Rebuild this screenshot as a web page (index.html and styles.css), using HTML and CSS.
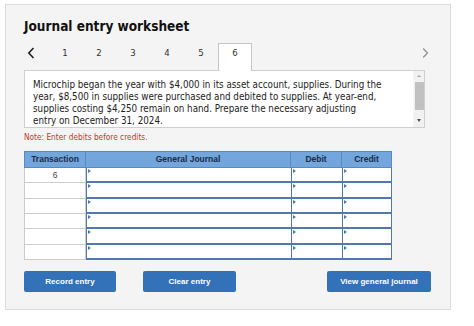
FILE: index.html
```html
<!DOCTYPE html>
<html>
<head>
<meta charset="utf-8">
<link rel="stylesheet" href="styles.css">
</head>
<body>
<div class="panel">
  <h1 class="title">Journal entry worksheet</h1>
  <div class="tabs">
    <div class="nav prev"><svg width="8" height="12" viewBox="0 0 8 12"><path d="M6.5 1 L1.8 6 L6.5 11" fill="none" stroke="#222" stroke-width="1.6"/></svg></div>
    <div class="tab">1</div>
    <div class="tab">2</div>
    <div class="tab">3</div>
    <div class="tab">4</div>
    <div class="tab">5</div>
    <div class="tab active">6</div>
    <div class="spacer"></div>
    <div class="nav next"><svg width="7" height="12" viewBox="0 0 7 12"><path d="M1.2 1.5 L5.5 6 L1.2 10.5" fill="none" stroke="#8a8a8a" stroke-width="1.1"/></svg></div>
  </div>
  <div class="box">
    <div class="desc">Microchip began the year with $4,000 in its asset account, supplies. During the<br>year, $8,500 in supplies were purchased and debited to supplies. At year-end,<br>supplies costing $4,250 remain on hand. Prepare the necessary adjusting<br>entry on December 31, 2024.</div>
    <div class="scrollbar">
      <div class="arrow up"></div>
      <div class="thumb"></div>
      <div class="track"></div>
      <div class="arrow down"></div>
    </div>
  </div>
  <div class="note">Note: Enter debits before credits.</div>
  <div class="grid">
    <div class="hd">Transaction</div>
    <div class="hd">General Journal</div>
    <div class="hd">Debit</div>
    <div class="hd">Credit</div>

    <div class="tc">6</div><div class="in"></div><div class="in"></div><div class="in"></div>
    <div class="tc"></div><div class="in"></div><div class="in"></div><div class="in"></div>
    <div class="tc"></div><div class="in"></div><div class="in"></div><div class="in"></div>
    <div class="tc"></div><div class="in"></div><div class="in"></div><div class="in"></div>
    <div class="tc"></div><div class="in"></div><div class="in"></div><div class="in"></div>
    <div class="tc"></div><div class="in"></div><div class="in"></div><div class="in"></div>
  </div>
  <div class="buttons">
    <button class="btn rec">Record entry</button>
    <button class="btn clr">Clear entry</button>
    <div class="spacer"></div>
    <button class="btn view">View general journal</button>
  </div>
</div>
</body>
</html>
```
FILE: styles.css
```css
* { box-sizing: border-box; }
html, body { margin: 0; padding: 0; background: #fff; }
body { width: 474px; height: 326px; overflow: hidden; }

.panel {
  margin: 4px 0 0 5px;
  width: 446px;
  height: 306px;
  border: 1px solid #dcdcdc;
  background: #f4f4f4;
  padding: 13px 18px 0 18px;
  font-family: "DejaVu Sans Condensed", "DejaVu Sans", sans-serif;
  font-stretch: condensed;
  color: #222;
}

.title {
  margin: 0;
  font-size: 13.5px;
  line-height: 16px;
  font-weight: bold;
  color: #111;
  height: 16px;
}

.tabs {
  margin-top: 9px;
  height: 27px;
  display: flex;
  align-items: flex-start;
}
.nav { height: 27px; display: flex; align-items: flex-start; padding-top: 4px; }
.prev { width: 24px; padding-left: 3px; }
.next { width: 10px; padding-right: 1px; }
.spacer { flex: 1; }
.tab {
  width: 34px;
  height: 27px;
  padding-top: 4px;
  line-height: 12px;
  font-size: 9.5px;
  text-align: center;
  color: #333;
}
.tab.active {
  height: 28px;
  margin-bottom: -1px;
  background: #fff;
  border: 1px solid #c6c6c6;
  border-bottom: none;
  padding-top: 3px;
  position: relative;
  z-index: 1;
}

.box {
  width: 401px;
  height: 58px;
  border: 1px solid #cfcfcf;
  background: #fff;
  display: flex;
  overflow: hidden;
}
.desc {
  flex: 1;
  padding: 8px 10px 0 8px;
  font-size: 9.75px;
  line-height: 12px;
  color: #222;
  overflow: hidden;
  white-space: nowrap;
}
.scrollbar {
  width: 11px;
  display: flex;
  flex-direction: column;
  align-items: center;
  background: #f1f1f1;
  border-left: 1px solid #f6f6f6;
}
.arrow { width: 0; height: 0; border-left: 2px solid transparent; border-right: 2px solid transparent; }
.arrow.up { margin-top: 4px; border-bottom: 2px solid #a3a3a3; }
.arrow.down { margin-bottom: 5px; border-top: 3px solid #505050; }
.thumb { width: 9px; height: 28px; margin-top: 5px; background: #c1c1c1; }
.track { flex: 1; }

.note {
  margin-top: 4px;
  font-size: 8.25px;
  line-height: 10px;
  color: #c0392b;
}

.grid {
  margin-top: 9px;
  width: 368px;
  display: grid;
  grid-template-columns: 62px 205px 51px 50px;
  grid-template-rows: 17px repeat(6, 15.33px);
  font-family: "Liberation Sans", Arial, sans-serif;
  font-stretch: normal;
}
.hd {
  background: #72a6dd;
  border: 1px solid #5a88c0;
  border-left-width: 0;
  font-weight: bold;
  font-size: 8.5px;
  line-height: 15px;
  text-align: center;
  color: #1b2b45;
}
.hd:first-child { border-left-width: 1px; }
.tc {
  background: #fff;
  border: 1px solid #cccccc;
  border-top: none;
  font-size: 8.5px;
  line-height: 14px;
  text-align: center;
  color: #444;
}
.in {
  background: #fff;
  border: 1px solid #5179ac;
  border-top-width: 0;
  border-right-width: 0;
  border-bottom-width: 2px;
}
.grid .in:nth-child(4n) { border-right-width: 1px; }
.in::before {
  content: "";
  display: block;
  width: 0; height: 0;
  margin: 1px 0 0 1px;
  border-left: 3px solid #4a76b4;
  border-top: 2px solid transparent;
  border-bottom: 2px solid transparent;
}

.buttons {
  margin-top: 11px;
  display: flex;
  width: 407px;
}
.btn {
  height: 21px;
  border: none;
  border-radius: 2px;
  background: #3371b9;
  color: #fff;
  font-family: "Liberation Sans", Arial, sans-serif;
  font-weight: bold;
  font-size: 8px;
  padding: 0;
  margin: 0;
}
.rec { width: 92px; }
.clr { width: 93px; margin-left: 27px; }
.view { width: 104px; }
```
